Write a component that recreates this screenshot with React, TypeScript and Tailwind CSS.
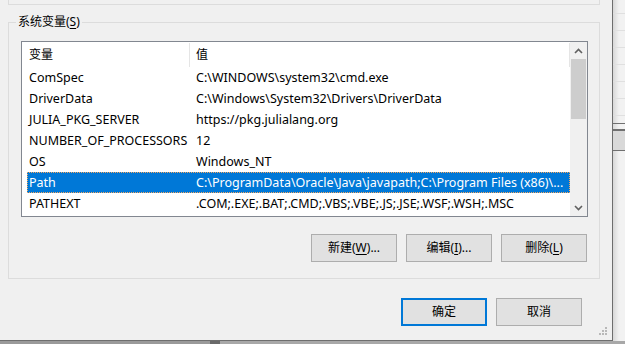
const font = { fontFamily: '"Noto Sans", "Noto Sans CJK SC", sans-serif' }

const rows: [string, string][] = [
  ['ComSpec', 'C:\\WINDOWS\\system32\\cmd.exe'],
  ['DriverData', 'C:\\Windows\\System32\\Drivers\\DriverData'],
  ['JULIA_PKG_SERVER', 'https://pkg.julialang.org'],
  ['NUMBER_OF_PROCESSORS', '12'],
  ['OS', 'Windows_NT'],
  ['Path', 'C:\\ProgramData\\Oracle\\Java\\javapath;C:\\Program Files (x86)\\...'],
  ['PATHEXT', '.COM;.EXE;.BAT;.CMD;.VBS;.VBE;.JS;.JSE;.WSF;.WSH;.MSC'],
]

function Btn({ pre, k, post = '', primary = false }: { pre: string; k?: string; post?: string; primary?: boolean }) {
  return (
    <button
      className={`w-[86px] h-[28px] bg-[#e1e1e1] text-[12px] text-black flex items-center justify-center ${primary ? 'border-2 border-[#0078d7]' : 'border border-[#adadad]'}`}>
      {pre}
      {k && <>(<span className="underline underline-offset-2">{k}</span>)</>}
      {post}
    </button>
  )
}

function Chevron({ up }: { up?: boolean }) {
  return (
    <svg width="9" height="6" viewBox="0 0 9 6" className="mx-auto">
      <path d={up ? 'M1 5 L4.5 1.5 L8 5' : 'M1 1 L4.5 4.5 L8 1'} fill="none" stroke="#606060" strokeWidth="1.6" />
    </svg>
  )
}

export default function App() {
  return (
    <div className="w-[625px] h-[344px] bg-[#f4f4f4] flex flex-col overflow-hidden" style={font}>
      <div className="flex h-[341px]">
        {/* dialog */}
        <div className="w-[613px] h-[341px] bg-[#f0f0f0] border-r-[1.5px] border-b border-[#6e6e6e] relative">
          <div className="ml-[8px] w-[592px] h-[5px] border-x border-b border-[#dcdcdc]" />

          {/* 系统变量 group */}
          <div className="relative ml-[8px] mt-[17px] w-[592px] h-[257px] border border-[#dcdcdc]">
            <div className="absolute left-[7px] -top-[9px] px-[2px] bg-[#f0f0f0] text-[12px] leading-[16px] text-black">
              系统变量(<span className="underline underline-offset-2">S</span>)
            </div>

            <div className="ml-[12px] mt-[18px] w-[567px] h-[176px] border border-[#828790] bg-white flex">
              <div className="flex-1 flex flex-col text-[12.5px] text-black">
                <div className="h-[25px] flex items-center text-[12px]">
                  <div className="w-[168px] h-[24px] pl-[7px] flex items-center border-r border-[#e5e5e5]">变量</div>
                  <div className="flex-1 h-[24px] pl-[6px] flex items-center border-r border-[#e5e5e5]">值</div>
                </div>
                {rows.map(([n, v]) => {
                  const sel = n === 'Path'
                  return (
                    <div key={n} className={`ml-[5px] h-[21px] pt-[2px] flex items-center whitespace-nowrap overflow-hidden ${sel ? 'bg-[#0078d7] text-white outline-1 outline-dotted outline-[#f5a860] -outline-offset-1' : ''}`}>
                      <div className="w-[163px] pl-[2px] overflow-hidden">{n}</div>
                      <div className="flex-1 pl-[6px] overflow-hidden">{v}</div>
                    </div>
                  )
                })}
              </div>
              {/* scrollbar */}
              <div className="w-[17px] bg-[#f0f0f0] flex flex-col">
                <div className="h-[17px] flex items-center"><Chevron up /></div>
                <div className="ml-[1px] w-[15px] h-[60px] bg-[#cdcdcd]" />
                <div className="flex-1" />
                <div className="h-[17px] flex items-center"><Chevron /></div>
              </div>
            </div>

            <div className="mt-[17px] mr-[12px] flex justify-end gap-[9px]">
              <Btn pre="新建" k="W" post="..." />
              <Btn pre="编辑" k="I" post="..." />
              <Btn pre="删除" k="L" />
            </div>
          </div>

          <div className="mt-[19px] mr-[30px] flex justify-end gap-[9px]">
            <Btn pre="确定" primary />
            <Btn pre="取消" />
          </div>

          {/* resize grip */}
          <svg width="10" height="10" viewBox="0 0 10 10" className="absolute right-[4px] bottom-[4px]">
            {[[7, 1], [4, 4], [7, 4], [1, 7], [4, 7], [7, 7]].map(([x, y]) => (
              <rect key={`${x}-${y}`} x={x} y={y} width="2" height="2" fill="#b8b8b8" />
            ))}
          </svg>
        </div>

        {/* window behind */}
        <div className="flex-1 flex flex-col bg-gradient-to-r from-[#d8d8d8] via-[#f2f2f2] to-[#f2f2f2]">
          <div className="h-[13px]" />
          {[0, 1, 2, 3, 4, 5].map(i => (
            <div key={i} className="h-[17px] border-t border-[#e0e0e0]" />
          ))}
          <div className="h-[8px] border-t border-[#e0e0e0]" />
          <div className="h-[6px] border-t border-[#707070]" />
          <div className="h-[22px] border-t-2 border-b border-[#707070] bg-[#d9d9d9]" />
        </div>
      </div>
      <div className="h-[3px] flex">
        <div className="w-[210px] bg-[#9a9a9a]" />
        <div className="w-[10px] bg-[#6a6a6a]" />
        <div className="flex-1 bg-[#a8a8a8]" />
      </div>
    </div>
  )
}
